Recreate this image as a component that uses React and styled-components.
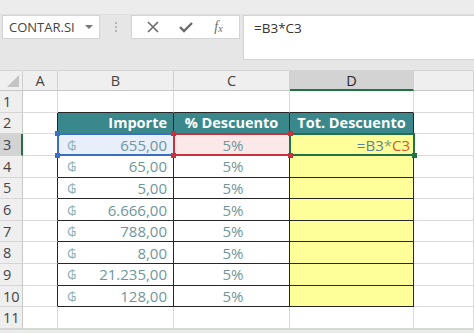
import React from "react";
import styled, { createGlobalStyle, css } from "styled-components";

const GlobalStyle = createGlobalStyle`
  html, body {
    margin: 0;
    padding: 0;
    background: #e6e6e6;
    font-family: "Open Sans", "Noto Sans", sans-serif;
    overflow: hidden;
  }
`;

const COLS = [23, 35, 116, 116, 124, 60];
const ROW_H = 21.65;

const rows = [
  { n: 3, amount: "655,00" },
  { n: 4, amount: "65,00" },
  { n: 5, amount: "5,00" },
  { n: 6, amount: "6.666,00" },
  { n: 7, amount: "788,00" },
  { n: 8, amount: "8,00" },
  { n: 9, amount: "21.235,00" },
  { n: 10, amount: "128,00" },
];

const selColors = {
  blue: { line: "#3b6fc6", fill: "#e8eefa" },
  red: { line: "#c9323d", fill: "#fbe9ea" },
  green: { line: "#217346", fill: "#ffff99" },
};

function App() {
  return (
    <>
      <GlobalStyle />
      <Page>
        <TopStrip />
        <FormulaBar>
          <NameBox>
            <span>CONTAR.SI</span>
            <DropArrow />
          </NameBox>
          <Grip>
            <i />
            <i />
            <i />
          </Grip>
          <ButtonBox>
            <IconBtn>
              <svg width="14" height="14" viewBox="0 0 14 14">
                <path d="M2 2 L12 12 M12 2 L2 12" stroke="#6b6b6b" strokeWidth="1.6" />
              </svg>
            </IconBtn>
            <IconBtn>
              <svg width="16" height="14" viewBox="0 0 16 14">
                <path d="M2 7 L6 11 L14 3" stroke="#6b6b6b" strokeWidth="2.4" fill="none" />
              </svg>
            </IconBtn>
            <IconBtn>
              <Fx>
                f<sub>x</sub>
              </Fx>
            </IconBtn>
          </ButtonBox>
          <FormulaInput>=B3*C3</FormulaInput>
        </FormulaBar>

        <Sheet>
          <Corner>
            <svg width="12" height="12" viewBox="0 0 12 12">
              <path d="M12 0 L12 12 L0 12 Z" fill="#c3c3c3" />
            </svg>
          </Corner>
          <ColHead>A</ColHead>
          <ColHead>B</ColHead>
          <ColHead>C</ColHead>
          <ColHead active>D</ColHead>
          <ColHead />

          <RowHead>1</RowHead>
          <Cell />
          <Cell edgeBottom />
          <Cell edgeBottom />
          <Cell edgeBottom />
          <Cell />

          <RowHead>2</RowHead>
          <Cell edgeRight />
          <HeadCell align="right">Importe</HeadCell>
          <HeadCell>% Descuento</HeadCell>
          <HeadCell>Tot. Descuento</HeadCell>
          <Cell />

          {rows.map((r) => {
            const sel = r.n === 3;
            return (
              <React.Fragment key={r.n}>
                <RowHead active={sel}>{r.n}</RowHead>
                <Cell edgeRight />
                <DataCell sel={sel ? "blue" : null} align="right">
                  <Guarani>₲</Guarani>
                  <span>{r.amount}</span>
                  {sel && (
                    <>
                      <Handle color="blue" v="top" h="left" />
                      <Handle color="blue" v="bottom" h="left" />
                    </>
                  )}
                </DataCell>
                <DataCell sel={sel ? "red" : null}>
                  5%
                  {sel && (
                    <>
                      <Handle color="red" v="top" h="left" />
                      <Handle color="red" v="bottom" h="left" />
                      <Handle color="red" v="top" h="right" />
                      <Handle color="red" v="bottom" h="right" />
                    </>
                  )}
                </DataCell>
                <TotalCell sel={sel ? "green" : null}>
                  {sel && (
                    <>
                      <Ref color="#5b7ea6">=B3</Ref>
                      <Ref color="#7aa27c">*</Ref>
                      <Ref color="#d2572c">C3</Ref>
                      <Handle color="green" v="bottom" h="right" />
                    </>
                  )}
                </TotalCell>
                <Cell />
              </React.Fragment>
            );
          })}

          <RowHead>11</RowHead>
          <Cell />
          <Cell />
          <Cell />
          <Cell />
          <Cell />
        </Sheet>
        <BottomEdge />
      </Page>
    </>
  );
}

export default App;

const Page = styled.div`
  width: 474px;
  height: 333px;
  background: #e6e6e6;
  display: flex;
  flex-direction: column;
  overflow: hidden;
`;

const TopStrip = styled.div`
  height: 15px;
  background: #ececec;
  border-bottom: 1px solid #e0e0e0;
  box-sizing: border-box;
`;

const FormulaBar = styled.div`
  display: flex;
  align-items: flex-start;
  height: 55px;
  padding-left: 2px;
`;

const NameBox = styled.div`
  width: 98px;
  height: 24px;
  box-sizing: border-box;
  background: #fff;
  border: 1px solid #d4d4d4;
  display: flex;
  align-items: center;
  justify-content: space-between;
  padding: 0 6px 0 6px;
  font-size: 13px;
  color: #444;
`;

const DropArrow = styled.span`
  width: 0;
  height: 0;
  border-left: 4px solid transparent;
  border-right: 4px solid transparent;
  border-top: 4px solid #777;
`;

const Grip = styled.div`
  width: 31px;
  height: 24px;
  display: flex;
  flex-direction: column;
  align-items: center;
  justify-content: center;
  gap: 2px;

  i {
    width: 2px;
    height: 2px;
    background: #b5b5b5;
  }
`;

const ButtonBox = styled.div`
  width: 109px;
  height: 24px;
  box-sizing: border-box;
  background: #fff;
  border: 1px solid #d4d4d4;
  display: flex;
  align-items: center;
  justify-content: space-around;
  padding: 0 4px;
`;

const IconBtn = styled.div`
  width: 24px;
  height: 20px;
  display: flex;
  align-items: center;
  justify-content: center;
`;

const Fx = styled.span`
  font-family: "Liberation Serif", serif;
  font-style: italic;
  font-size: 14px;
  color: #6b6b6b;

  sub {
    font-size: 10px;
    vertical-align: -1px;
  }
`;

const FormulaInput = styled.div`
  margin-left: 3px;
  flex: 1;
  height: 45px;
  box-sizing: border-box;
  background: #fff;
  border: 1px solid #d4d4d4;
  border-right: none;
  padding: 3px 10px;
  font-size: 13.5px;
  color: #333;
`;

const Sheet = styled.div`
  display: grid;
  grid-template-columns: ${COLS.map((c) => c + "px").join(" ")};
  grid-template-rows: 20px repeat(11, ${ROW_H}px);
  background: #fff;
  border-top: 1px solid #d4d4d4;
`;

const BottomEdge = styled.div`
  flex: 1;
  background: #e9ece9;
  border-top: 1px solid #d6d6d6;
`;

const Corner = styled.div`
  background: #efefef;
  border-right: 1px solid #d0d0d0;
  border-bottom: 1px solid #c8c8c8;
  display: flex;
  align-items: flex-end;
  justify-content: flex-end;
  padding: 0 3px 3px 0;
`;

const ColHead = styled.div`
  background: ${({ active }) => (active ? "#d3d3d3" : "#efefef")};
  border-right: 1px solid #d0d0d0;
  border-bottom: ${({ active }) => (active ? "2px solid #217346" : "1px solid #c8c8c8")};
  display: flex;
  align-items: center;
  justify-content: center;
  font-size: 14.5px;
  color: ${({ active }) => (active ? "#262626" : "#444")};
`;

const RowHead = styled.div`
  background: ${({ active }) => (active ? "#d3d3d3" : "#efefef")};
  border-right: ${({ active }) => (active ? "2px solid #217346" : "1px solid #c8c8c8")};
  border-bottom: 1px solid #d6d6d6;
  display: flex;
  align-items: center;
  justify-content: flex-start;
  padding-left: 3px;
  font-size: 14.5px;
  color: #444;
`;

const Cell = styled.div`
  border-right: 1px solid ${({ edgeRight }) => (edgeRight ? "#262626" : "#dadada")};
  border-bottom: 1px solid ${({ edgeBottom }) => (edgeBottom ? "#262626" : "#dadada")};
`;

const tableBorders = css`
  border-right: 1.5px solid #262626;
  border-bottom: 1.5px solid #262626;
  box-sizing: border-box;
`;

const HeadCell = styled.div`
  ${tableBorders};
  background: #3a888c;
  color: #fff;
  font-weight: 700;
  font-size: 14.5px;
  display: flex;
  align-items: center;
  justify-content: ${({ align }) => (align === "right" ? "flex-end" : "center")};
  padding: 0 6px;
`;

const Selected = css`
  position: relative;

  &::after {
    content: "";
    position: absolute;
    left: -1.5px;
    top: -1.5px;
    right: -1.5px;
    bottom: -1.5px;
    border: 2px solid ${({ sel }) => selColors[sel].line};
    pointer-events: none;
  }
`;

const Handle = styled.i`
  position: absolute;
  z-index: 2;
  width: 5px;
  height: 5px;
  background: ${({ color }) => selColors[color].line};
  ${({ v }) => (v === "top" ? "top: -3px;" : "bottom: -3.5px;")}
  ${({ h }) => (h === "left" ? "left: -3px;" : "right: -3.5px;")}
`;

const DataCell = styled.div`
  ${tableBorders};
  background: ${({ sel }) => (sel ? selColors[sel].fill : "#fff")};
  color: #6e979c;
  font-size: 15px;
  display: flex;
  align-items: center;
  justify-content: ${({ align }) => (align === "right" ? "space-between" : "center")};
  padding: 0 6px 0 9px;
  ${({ sel }) => sel && Selected};
`;

const TotalCell = styled.div`
  ${tableBorders};
  background: #ffff99;
  font-size: 15px;
  display: flex;
  align-items: center;
  justify-content: flex-end;
  padding: 0 3px;
  ${({ sel }) => sel && Selected};
`;

const Guarani = styled.span`
  font-size: 13px;
  color: #8fb2b6;
`;

const Ref = styled.span`
  color: ${({ color }) => color};
`;
